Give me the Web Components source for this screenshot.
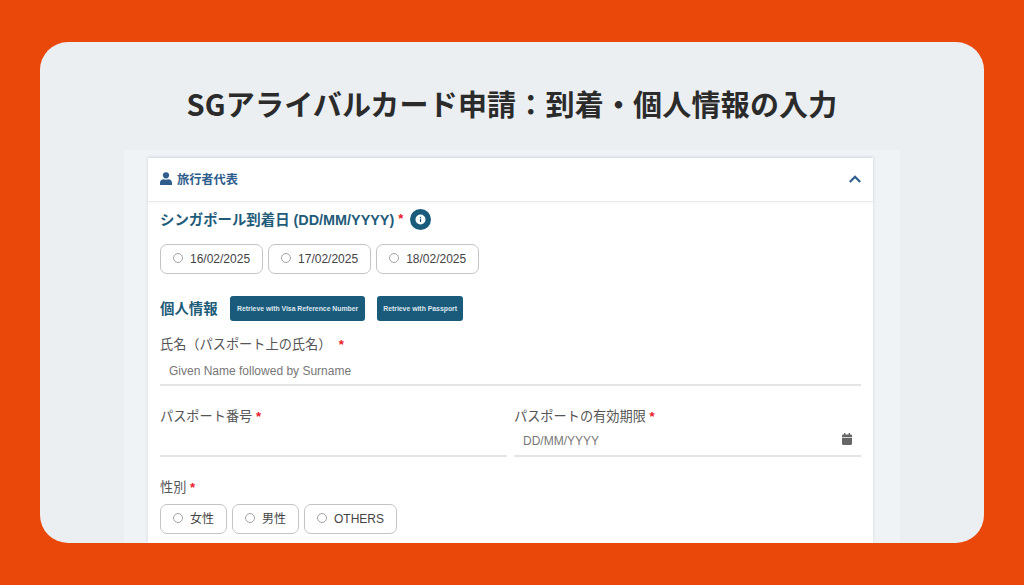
<!DOCTYPE html>
<html lang="ja">
<head>
<meta charset="utf-8">
<title>SGアライバルカード申請</title>
<style>
  html, body { margin: 0; height: 585px; overflow: hidden; background: #e9480a; }
  body { font-family: "Liberation Sans", "Noto Sans CJK JP", sans-serif; }
</style>
</head>
<body>
<arrival-panel heading="SGアライバルカード申請&#xFF1A;到着・個人情報の入力">
  <form-card heading="旅行者代表">
    <section-title>シンガポール到着日 (DD/MM/YYYY)</section-title>
    <pill-group style="margin-top:14px">
      <radio-pill>16/02/2025</radio-pill>
      <radio-pill>17/02/2025</radio-pill>
      <radio-pill>18/02/2025</radio-pill>
    </pill-group>
    <retrieve-row heading="個人情報">
      <retrieve-button style="margin-left:12px">Retrieve with Visa Reference Number</retrieve-button>
      <retrieve-button style="margin-left:12px;padding:0 6px">Retrieve with Passport</retrieve-button>
    </retrieve-row>
    <text-field label="氏名&#xFF08;パスポート上の氏名&#xFF09; " placeholder="Given Name followed by Surname" style="margin-top:14px"></text-field>
    <field-row>
      <text-field label="パスポート番号"></text-field>
      <text-field label="パスポートの有効期限" placeholder="DD/MM/YYYY" date></text-field>
    </field-row>
    <choice-label>性別</choice-label>
    <pill-group style="margin-top:6px">
      <radio-pill>女性</radio-pill>
      <radio-pill>男性</radio-pill>
      <radio-pill>OTHERS</radio-pill>
    </pill-group>
  </form-card>
</arrival-panel>

<script>
// Rounded panel with the big title and the pale strip behind the card
class ArrivalPanel extends HTMLElement {
  constructor() {
    super();
    this.attachShadow({ mode: 'open' });
  }
  connectedCallback() {
    this.shadowRoot.innerHTML = `
      <style>
        :host {
          display: block;
          box-sizing: border-box;
          width: 944px;
          height: 501px;
          margin: 42px 0 0 40px;
          background: #ebeff2;
          border-radius: 28px;
          overflow: hidden;
        }
        h1 {
          margin: 0;
          height: 108px;
          box-sizing: border-box;
          padding-top: 40px;
          text-align: center;
          font: 700 29px/42px "Noto Sans CJK JP", sans-serif;
          letter-spacing: 0.2px;
          color: #2b2b2b;
        }
        .strip {
          margin: 0 84px;
          height: 393px;
          padding: 8px 27px 0 24px;
          box-sizing: border-box;
          background: #f0f3f6;
        }
      </style>
      <h1>${this.getAttribute('heading')}</h1>
      <div class="strip"><slot></slot></div>
    `;
  }
}

class FormCard extends HTMLElement {
  constructor() {
    super();
    this.attachShadow({ mode: 'open' });
  }
  connectedCallback() {
    this.shadowRoot.innerHTML = `
      <style>
        :host {
          display: block;
          background: #fff;
          height: 385px;
          box-shadow: 0 -1px 3px rgba(60, 80, 100, 0.18);
        }
        header {
          display: flex;
          align-items: center;
          box-sizing: border-box;
          height: 44px;
          padding: 0 12px 2px 12px;
          border-bottom: 1px solid #e8eaed;
          box-shadow: 0 1px 2px rgba(0, 0, 0, 0.04);
          color: #2f5d8c;
          font: 700 12.2px "Liberation Sans", "Noto Sans CJK JP", sans-serif;
        }
        header svg.user { width: 12px; height: 13px; margin-right: 5px; fill: #2f5d8c; }
        header span { flex: 1; }
        header svg.chev { width: 12px; height: 8px; fill: none; stroke: #2f5d8c; stroke-width: 2.2; }
        .body { padding: 6px 12px 0; }
      </style>
      <header>
        <svg class="user" viewBox="0 0 12 13"><circle cx="6" cy="3.3" r="3.1"/><path d="M0 13v-2.2C0 8.6 1.7 7.2 3.4 7.2c.8.3 1.7.5 2.6.5s1.8-.2 2.6-.5C10.3 7.2 12 8.6 12 10.8V13z"/></svg>
        <span>${this.getAttribute('heading')}</span>
        <svg class="chev" viewBox="0 0 12 8"><path d="M.8 7 6 1.8 11.200 7"/></svg>
      </header>
      <div class="body"><slot></slot></div>
    `;
  }
}

class SectionTitle extends HTMLElement {
  constructor() {
    super();
    this.attachShadow({ mode: 'open' });
  }
  connectedCallback() {
    this.shadowRoot.innerHTML = `
      <style>
        :host {
          display: flex;
          align-items: center;
          height: 22px;
          color: #1f5c7a;
          font: 700 14.4px "Liberation Sans", "Noto Sans CJK JP", sans-serif;
        }
        .t { position: relative; top: -1px; }
        b { color: #e8202a; font-weight: 700; margin: -2px 7px 0 4px; font-size: 13px; }
        svg { width: 21px; height: 21px; }
      </style>
      <span class="t"><slot></slot></span><b>*</b>
      <svg viewBox="0 0 21 21">
        <circle cx="10.5" cy="10.5" r="10.5" fill="#1a5b7c"/>
        <circle cx="10.5" cy="10.5" r="5" fill="#fff"/>
        <rect x="9.9" y="9.6" width="1.2" height="3.4" fill="#1a5b7c"/>
        <rect x="9.9" y="7.8" width="1.2" height="1.2" fill="#1a5b7c"/>
      </svg>
    `;
  }
}

class PillGroup extends HTMLElement {
  constructor() {
    super();
    this.attachShadow({ mode: 'open' });
    this.shadowRoot.innerHTML = `
      <style>:host { display: flex; gap: 5px; }</style>
      <slot></slot>
    `;
  }
}

class RadioPill extends HTMLElement {
  constructor() {
    super();
    this.attachShadow({ mode: 'open' });
    this.shadowRoot.innerHTML = `
      <style>
        :host {
          display: flex;
          align-items: center;
          box-sizing: border-box;
          height: 30px;
          padding: 0 12px;
          border: 1.5px solid #c4c4c4;
          border-radius: 7px;
          background: #fff;
          color: #444;
          font: 12px/16px "Liberation Sans", "Noto Sans CJK JP", sans-serif;
        }
        i {
          box-sizing: border-box;
          width: 10px;
          height: 10px;
          margin: -2px 7px 0 0;
          border: 1px solid #a3a3a3;
          border-radius: 50%;
        }
      </style>
      <i></i><slot></slot>
    `;
  }
}

class RetrieveRow extends HTMLElement {
  constructor() {
    super();
    this.attachShadow({ mode: 'open' });
  }
  connectedCallback() {
    this.shadowRoot.innerHTML = `
      <style>
        :host { display: flex; align-items: center; margin-top: 22px; height: 25px; }
        span { width: 58px; color: #1f5c7a; font: 700 14.4px/20px "Noto Sans CJK JP", sans-serif; white-space: nowrap; position: relative; top: -1px; }
      </style>
      <span>${this.getAttribute('heading')}</span><slot></slot>
    `;
  }
}

class RetrieveButton extends HTMLElement {
  constructor() {
    super();
    this.attachShadow({ mode: 'open' });
    this.shadowRoot.innerHTML = `
      <style>
        :host {
          display: flex;
          align-items: center;
          height: 25px;
          padding: 0 7px;
          border-radius: 3px;
          background: #1a5b7c;
          color: #dfe8ee;
          font: 700 6.85px "Liberation Sans", sans-serif;
        }
      </style>
      <slot></slot>
    `;
  }
}

// Label, a value line and the grey rule under it
class TextField extends HTMLElement {
  constructor() {
    super();
    this.attachShadow({ mode: 'open' });
  }
  connectedCallback() {
    const label = this.getAttribute('label');
    const placeholder = this.getAttribute('placeholder') || '';
    const dateIcon = this.hasAttribute('date')
      ? `<svg viewBox="0 0 10 12"><path d="M2 0h1.400v1.400h3.200V0H8v1.400h.8c.7 0 1.200.5 1.200 1.200V4H0V2.600c0-.7.5-1.200 1.200-1.200H2zM0 4.800h10v6c0 .7-.5 1.200-1.200 1.200H1.200C.5 12 0 11.500 0 10.800z"/></svg>`
      : '';
    this.shadowRoot.innerHTML = `
      <style>
        :host { display: block; flex: 1; }
        label {
          display: block;
          height: 20px;
          line-height: 20px;
          color: #555;
          font-size: 13.2px;
          white-space: pre;
        }
        b { color: #e8202a; }
        .line {
          display: flex;
          align-items: center;
          justify-content: space-between;
          box-sizing: border-box;
          height: var(--line-h, 31px);
          padding: var(--line-top, 2px) 9px 0;
          border-bottom: 2px solid #e4e4e4;
          color: #777;
          font-size: 12px;
        }
        svg { width: 10px; height: 12px; fill: #666; margin-top: -4px; }
      </style>
      <label>${label} <b>*</b></label>
      <div class="line"><span>${placeholder}</span>${dateIcon}</div>
    `;
  }
}

class FieldRow extends HTMLElement {
  constructor() {
    super();
    this.attachShadow({ mode: 'open' });
    this.shadowRoot.innerHTML = `
      <style>:host { display: flex; gap: 7px; margin-top: 21px; --line-h: 30px; --line-top: 0px; }</style>
      <slot></slot>
    `;
  }
}

class ChoiceLabel extends HTMLElement {
  constructor() {
    super();
    this.attachShadow({ mode: 'open' });
    this.shadowRoot.innerHTML = `
      <style>
        :host { display: block; margin-top: 21px; height: 20px; line-height: 20px; color: #555; font-size: 13.2px; }
        b { color: #e8202a; }
      </style>
      <slot></slot> <b>*</b>
    `;
  }
}

customElements.define('arrival-panel', ArrivalPanel);
customElements.define('form-card', FormCard);
customElements.define('section-title', SectionTitle);
customElements.define('pill-group', PillGroup);
customElements.define('radio-pill', RadioPill);
customElements.define('retrieve-row', RetrieveRow);
customElements.define('retrieve-button', RetrieveButton);
customElements.define('text-field', TextField);
customElements.define('field-row', FieldRow);
customElements.define('choice-label', ChoiceLabel);
</script>
</body>
</html>
